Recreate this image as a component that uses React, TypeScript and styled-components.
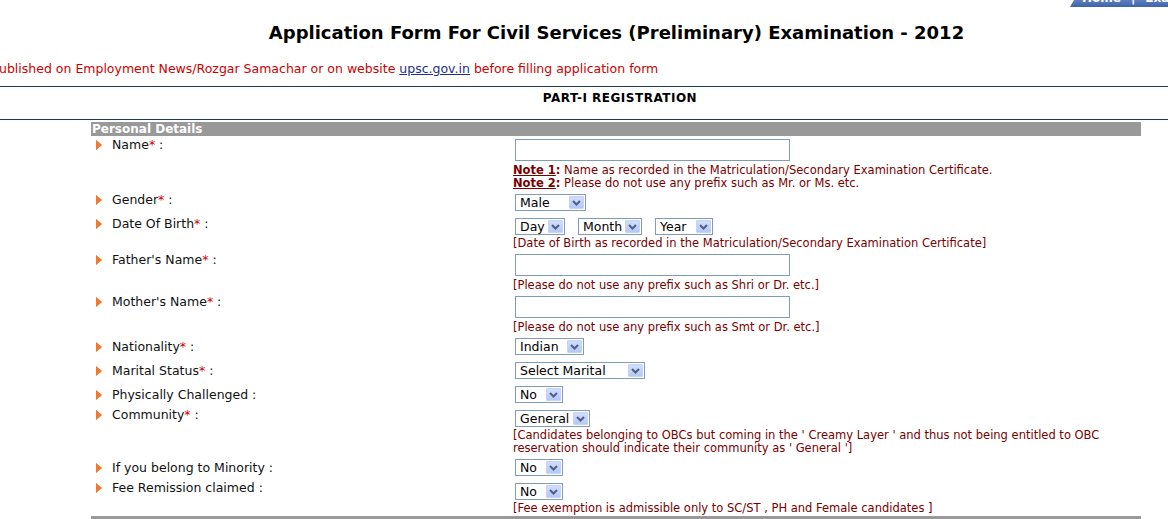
import React from "react";
import styled, { createGlobalStyle } from "styled-components";

const Global = createGlobalStyle`
  html, body { margin: 0; padding: 0; background: #ffffff; }
  body { font-family: "DejaVu Sans", Verdana, sans-serif; color: #000; overflow: hidden; }
`;

const Page = styled.div`
  width: 1168px;
  height: 519px;
  overflow: hidden;
  position: relative;
`;

const TopNav = styled.div`
  display: flex;
  justify-content: flex-end;
  height: 7px;
  overflow: hidden;
`;

const NavTab = styled.div`
  width: 98px;
  height: 7px;
  background: linear-gradient(#5b7fc0, #3f63a6);
  clip-path: polygon(4px 0, 100% 0, 100% 100%, 0 100%);
  color: #fff;
  font-family: "DejaVu Sans", sans-serif;
  font-size: 12px;
  font-weight: bold;
  line-height: 14px;
  white-space: nowrap;
  overflow: hidden;
`;

const NavText = styled.div`
  margin-top: -9px;
  padding-left: 12px;
  display: flex;
  gap: 10px;
`;

const Title = styled.h1`
  margin: 14px 0 0 0;
  padding-left: 65px;
  text-align: center;
  font-size: 18px;
  font-weight: bold;
  line-height: 24px;
  font-family: "DejaVu Sans", Verdana, sans-serif;
`;

const Notice = styled.div`
  margin-top: 16px;
  margin-left: -1px;
  font-size: 12.5px;
  line-height: 15px;
  color: #cc0000;
  white-space: nowrap;
`;

const Link = styled.a`
  color: #1a2f8a;
  text-decoration: underline;
`;

const Band = styled.div`
  margin-top: 10px;
  border-top: 1px solid #1c3a58;
  border-bottom: 1px solid #1c3a58;
  height: 32px;
  display: flex;
  justify-content: center;
  padding-left: 72px;
`;

const BandTitle = styled.div`
  font-size: 12px;
  font-weight: bold;
  line-height: 22px;
  letter-spacing: 0.5px;
`;

const FormTable = styled.div`
  margin: 2px 0 0 91px;
  width: 1050px;
`;

const SectionBar = styled.div`
  background: #999999;
  color: #ffffff;
  font-size: 12px;
  font-weight: bold;
  height: 14px;
  line-height: 15px;
  padding-left: 1px;
  overflow: hidden;
`;

const Row = styled.div`
  display: grid;
  grid-template-columns: 422px 1fr;
  align-items: start;
  padding: 3px 0 4px;
`;

const LabelCell = styled.div<{ $top: number }>`
  display: flex;
  align-items: center;
  gap: 10px;
  margin-top: ${(p) => p.$top}px;
  padding-left: 5px;
  height: 12px;
  font-size: 12.5px;
  line-height: 12px;
  color: #111;
  white-space: nowrap;
`;

const Bullet = styled.span`
  flex: none;
  width: 0;
  height: 0;
  border-top: 5px solid transparent;
  border-bottom: 5px solid transparent;
  border-left: 6px solid #ee7a30;
  filter: drop-shadow(0 0 0.4px #f5b080);
`;

const Star = styled.span`
  color: #cc0000;
`;

const ValueCell = styled.div`
  display: flex;
  flex-direction: column;
  align-items: flex-start;
`;

const TextInput = styled.input`
  box-sizing: border-box;
  width: 275px;
  height: 22px;
  margin: 0 0 1px 2px;
  border: 1px solid #7f9db9;
  background: #fff;
  padding: 0 3px;
  font-family: "DejaVu Sans", sans-serif;
  font-size: 12px;
  outline: none;
`;

const Controls = styled.div`
  display: flex;
  margin-left: 2px;
  gap: 13px;
`;

const SelectBox = styled.div<{ $w: number }>`
  box-sizing: border-box;
  width: ${(p) => p.$w}px;
  height: 17px;
  border: 1px solid #7f9db9;
  background: #fff;
  display: flex;
  align-items: center;
  justify-content: space-between;
  padding: 0 1px 0 4px;
  font-size: 12.5px;
  line-height: 15px;
  color: #000;
`;

const SelectText = styled.span`
  white-space: nowrap;
`;

const ArrowBtn = styled.span`
  flex: none;
  box-sizing: border-box;
  width: 15px;
  height: 13px;
  border: 1px solid #c3d3fd;
  border-radius: 1px;
  background: linear-gradient(#d2ddfb, #b5c9f7);
  display: flex;
  align-items: center;
  justify-content: center;
`;

const Note = styled.div`
  margin: 2px 0 -3px 0;
  font-size: 11.5px;
  line-height: 13px;
  color: #7a0000;
  white-space: nowrap;
`;

const NoteKey = styled.span`
  font-weight: bold;
  text-decoration: underline;
`;

const Colon = styled.span`
  font-weight: bold;
`;

const BottomBar = styled.div`
  height: 4px;
  background: #999999;
`;

const Select = ({ w, value }: { w: number; value: string }) => (
  <SelectBox $w={w}>
    <SelectText>{value}</SelectText>
    <ArrowBtn>
      <svg width="9" height="6" viewBox="0 0 9 6">
        <path d="M1 1 L4.5 4.5 L8 1" fill="none" stroke="#4d6185" strokeWidth="2" />
      </svg>
    </ArrowBtn>
  </SelectBox>
);

const Label = ({ text, req, top = 0 }: { text: string; req?: boolean; top?: number }) => (
  <LabelCell $top={top}>
    <Bullet />
    <span>
      {text}
      {req && <Star>*</Star>} :
    </span>
  </LabelCell>
);

export default function App() {
  return (
    <Page>
      <Global />
      <TopNav>
        <NavTab>
          <NavText>
            <span>Home</span>
            <span>|</span>
            <span>Exam</span>
          </NavText>
        </NavTab>
      </TopNav>
      <Title>Application Form For Civil Services (Preliminary) Examination - 2012</Title>
      <Notice>
        ublished on Employment News/Rozgar Samachar or on website <Link href="#">upsc.gov.in</Link> before
        filling application form
      </Notice>
      <Band>
        <BandTitle>PART-I REGISTRATION</BandTitle>
      </Band>
      <FormTable>
        <SectionBar>Personal Details</SectionBar>

        <Row>
          <Label text="Name" req />
          <ValueCell>
            <TextInput />
            <Note>
              <NoteKey>Note 1</NoteKey>
              <Colon>:</Colon> Name as recorded in the Matriculation/Secondary Examination Certificate.
              <br />
              <NoteKey>Note 2</NoteKey>
              <Colon>:</Colon> Please do not use any prefix such as Mr. or Ms. etc.
            </Note>
          </ValueCell>
        </Row>

        <Row>
          <Label text="Gender" req />
          <ValueCell>
            <Controls>
              <Select w={71} value="Male" />
            </Controls>
          </ValueCell>
        </Row>

        <Row>
          <Label text="Date Of Birth" req />
          <ValueCell>
            <Controls>
              <Select w={50} value="Day" />
              <Select w={64} value="Month" />
              <Select w={58} value="Year" />
            </Controls>
            <Note>[Date of Birth as recorded in the Matriculation/Secondary Examination Certificate]</Note>
          </ValueCell>
        </Row>

        <Row>
          <Label text="Father's Name" req />
          <ValueCell>
            <TextInput />
            <Note>[Please do not use any prefix such as Shri or Dr. etc.]</Note>
          </ValueCell>
        </Row>

        <Row>
          <Label text="Mother's Name" req />
          <ValueCell>
            <TextInput />
            <Note>[Please do not use any prefix such as Smt or Dr. etc.]</Note>
          </ValueCell>
        </Row>

        <Row>
          <Label text="Nationality" req top={3} />
          <ValueCell>
            <Controls>
              <Select w={69} value="Indian" />
            </Controls>
          </ValueCell>
        </Row>

        <Row>
          <Label text="Marital Status" req top={3} />
          <ValueCell>
            <Controls>
              <Select w={130} value="Select Marital" />
            </Controls>
          </ValueCell>
        </Row>

        <Row>
          <Label text="Physically Challenged" top={3} />
          <ValueCell>
            <Controls>
              <Select w={48} value="No" />
            </Controls>
          </ValueCell>
        </Row>

        <Row>
          <Label text="Community" req top={-1} />
          <ValueCell>
            <Controls>
              <Select w={75} value="General" />
            </Controls>
            <Note>
              [Candidates belonging to OBCs but coming in the ' Creamy Layer ' and thus not being entitled to OBC
              <br />
              reservation should indicate their community as ' General ']
            </Note>
          </ValueCell>
        </Row>

        <Row>
          <Label text="If you belong to Minority" top={3} />
          <ValueCell>
            <Controls>
              <Select w={48} value="No" />
            </Controls>
          </ValueCell>
        </Row>

        <Row>
          <Label text="Fee Remission claimed" top={-1} />
          <ValueCell>
            <Controls>
              <Select w={48} value="No" />
            </Controls>
            <Note>[Fee exemption is admissible only to SC/ST , PH and Female candidates ]</Note>
          </ValueCell>
        </Row>

        <BottomBar />
      </FormTable>
    </Page>
  );
}
